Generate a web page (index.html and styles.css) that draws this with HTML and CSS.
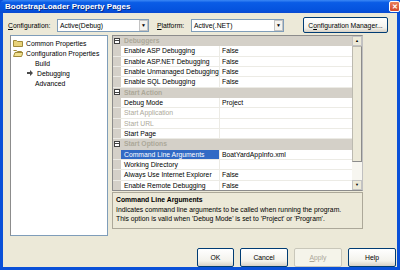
FILE: index.html
```html
<!DOCTYPE html>
<html lang="en">
<head>
    <meta charset="UTF-8">
    <title>BootstrapLoader Property Pages</title>
    <link rel="stylesheet" href="styles.css">
</head>
<body>
    <div class="window">
        <div class="titlebar">
            <span class="title">BootstrapLoader Property Pages</span>
            <span class="close">&#x2715;</span>
        </div>

        <div class="client">
            <div class="toprow">
                <span class="label"><u>C</u>onfiguration:</span>
                <div class="combo combo-config"><span>Active(Debug)</span><b class="drop">&#9660;</b></div>
                <span class="label label-platform"><u>P</u>latform:</span>
                <div class="combo combo-platform"><span>Active(.NET)</span><b class="drop">&#9660;</b></div>
                <button class="btn btn-manager">C<u>o</u>nfiguration Manager...</button>
            </div>

            <div class="middle">
                <div class="tree">
                    <div class="node"><svg class="folder" width="10" height="8" viewBox="0 0 10 8"><path d="M0.5 1.5h3l1 1h5v5h-9z" fill="#e8d27a" stroke="#a08a3a"/></svg>Common Properties</div>
                    <div class="node"><svg class="folder" width="10" height="8" viewBox="0 0 10 8"><path d="M0.5 1.5h3l1 1h4v1.5" fill="#e8d27a" stroke="#a08a3a"/><path d="M0.5 7.5l1.5-4h8l-1.5 4z" fill="#f2e190" stroke="#a08a3a"/></svg>Configuration Properties</div>
                    <div class="node child">Build</div>
                    <div class="node child"><svg class="pin" width="8" height="8" viewBox="0 0 8 8"><path d="M1 3h3V1l3 3-3 3V5H1z" fill="#4a4a4a"/></svg>Debugging</div>
                    <div class="node child">Advanced</div>
                </div>

                <div class="rightcol">
                    <div class="grid">
                        <div class="rows">
                            <div class="row cat"><span class="gutter"><i class="minus"></i></span><span class="catname">Debuggers</span></div>
                            <div class="row"><span class="gutter"></span><span class="name">Enable ASP Debugging</span><span class="value">False</span></div>
                            <div class="row"><span class="gutter"></span><span class="name">Enable ASP.NET Debugging</span><span class="value">False</span></div>
                            <div class="row"><span class="gutter"></span><span class="name">Enable Unmanaged Debugging</span><span class="value">False</span></div>
                            <div class="row"><span class="gutter"></span><span class="name">Enable SQL Debugging</span><span class="value">False</span></div>
                            <div class="row cat"><span class="gutter"><i class="minus"></i></span><span class="catname">Start Action</span></div>
                            <div class="row"><span class="gutter"></span><span class="name">Debug Mode</span><span class="value">Project</span></div>
                            <div class="row disabled"><span class="gutter"></span><span class="name">Start Application</span><span class="value"></span></div>
                            <div class="row disabled"><span class="gutter"></span><span class="name">Start URL</span><span class="value"></span></div>
                            <div class="row"><span class="gutter"></span><span class="name">Start Page</span><span class="value"></span></div>
                            <div class="row cat"><span class="gutter"><i class="minus"></i></span><span class="catname">Start Options</span></div>
                            <div class="row selected"><span class="gutter"></span><span class="name">Command Line Arguments</span><span class="value">BoatYardAppInfo.xml</span></div>
                            <div class="row"><span class="gutter"></span><span class="name">Working Directory</span><span class="value"></span></div>
                            <div class="row"><span class="gutter"></span><span class="name">Always Use Internet Explorer</span><span class="value">False</span></div>
                            <div class="row"><span class="gutter"></span><span class="name">Enable Remote Debugging</span><span class="value">False</span></div>
                        </div>
                        <div class="scrollbar">
                            <div class="arrow">&#9650;</div>
                            <div class="thumb"></div>
                            <div class="track"></div>
                            <div class="arrow">&#9660;</div>
                        </div>
                    </div>
                    <div class="desc">
                        <div class="desc-title">Command Line Arguments</div>
                        <div class="desc-text">Indicates command line arguments to be called when running the program.<br>This option is valid when 'Debug Mode' is set to 'Project' or 'Program'.</div>
                    </div>
                </div>
            </div>

            <div class="buttons">
                <button class="btn btn-ok">OK</button>
                <button class="btn">Cancel</button>
                <button class="btn" disabled><u>A</u>pply</button>
                <button class="btn">Help</button>
            </div>
        </div>
    </div>
</body>
</html>
```

FILE: styles.css
```css
body {
    margin: 0;
    padding: 0;
    font-family: "Liberation Sans", Arial, sans-serif;
    font-size: 6.8px;
    color: #000000;
    background-color: #ffffff;
}
.window {
    width: 400px;
    height: 270px;
    box-sizing: border-box;
    display: flex;
    flex-direction: column;
    background-color: #0a50d8;
    padding: 0 3px 3px 3px;
    overflow: hidden;
}
.titlebar {
    height: 18px;
    margin: 0 -3px;
    display: flex;
    align-items: center;
    justify-content: space-between;
    padding: 0 3px 0 5px;
    background: linear-gradient(#3b88f5, #0a5ce6 20%, #0553de 75%, #0a4ad0);
    border-radius: 5px 5px 0 0;
}
.titlebar .title {
    color: #ffffff;
    font-weight: bold;
    font-size: 8px;
    text-shadow: 1px 1px 0 #0a2a80;
}
.titlebar .close {
    width: 11px;
    height: 11px;
    box-sizing: border-box;
    margin-right: -3px;
    border: 1px solid #ffffff;
    border-radius: 2px;
    background: linear-gradient(#e8805e, #d4482a);
    color: #ffffff;
    font-size: 7px;
    font-weight: bold;
    line-height: 9px;
    text-align: center;
}
.client {
    flex: 1;
    display: flex;
    flex-direction: column;
    background-color: #ece9d8;
}
.toprow {
    display: flex;
    align-items: center;
    height: 16px;
    margin-top: 4px;
    padding-left: 5px;
}
.label {
    width: 49px;
}
.label-platform {
    width: 34px;
    margin-left: 8px;
}
.combo {
    height: 13px;
    box-sizing: border-box;
    border: 1px solid #7f9db9;
    background-color: #ffffff;
    display: flex;
    align-items: center;
    justify-content: space-between;
    padding-left: 2px;
}
.combo-config {
    width: 92px;
}
.combo-platform {
    width: 93px;
}
.combo .drop {
    width: 9px;
    height: 11px;
    box-sizing: border-box;
    border: 1px solid #c3c3c3;
    background-color: #f4f3ee;
    font-size: 5px;
    line-height: 9px;
    text-align: center;
    font-weight: normal;
}
.btn {
    height: 16px;
    box-sizing: border-box;
    border: 1px solid #003c74;
    border-radius: 2px;
    background: linear-gradient(#ffffff, #f3f2ec 70%, #d6d0c5);
    font-family: "Liberation Sans", Arial, sans-serif;
    font-size: 6.8px;
    color: #000000;
    padding: 0;
}
.btn:disabled {
    color: #aca899;
    border-color: #c9c7ba;
    background: #f5f4ea;
}
.btn-manager {
    width: 85px;
    margin-left: 19px;
}
.middle {
    display: flex;
    margin-top: 2px;
    padding-left: 7px;
}
.tree {
    width: 98px;
    height: 201px;
    box-sizing: border-box;
    border: 1px solid #7f9db9;
    border-left-color: #8c8c8c;
    background-color: #ffffff;
    padding-top: 2px;
}
.node {
    display: flex;
    align-items: center;
    height: 10px;
    padding-left: 2px;
}
.node.child {
    padding-left: 24px;
}
.folder {
    margin-right: 3px;
}
.pin {
    margin-left: -9px;
    margin-right: 3px;
}
.rightcol {
    margin-left: 4px;
    width: 251px;
}
.grid {
    height: 156px;
    box-sizing: border-box;
    border: 1px solid #8c8c8c;
    border-right-color: #c0c0c0;
    display: flex;
    background-color: #ffffff;
}
.rows {
    flex: 1;
    overflow: hidden;
}
.row {
    display: flex;
    height: 10.33px;
    box-sizing: border-box;
    border-bottom: 1px solid #ecebe5;
    align-items: center;
}
.gutter {
    width: 8px;
    align-self: stretch;
    background-color: #d4d0c8;
    display: flex;
    align-items: center;
    justify-content: center;
}
.minus {
    width: 6px;
    height: 6px;
    box-sizing: border-box;
    border: 1px solid #404040;
    background: linear-gradient(#404040, #404040) center / 4px 1px no-repeat, #ffffff;
}
.name {
    width: 99px;
    padding-left: 3px;
    box-sizing: border-box;
    align-self: stretch;
    display: flex;
    align-items: center;
    border-right: 1px solid #ecebe5;
    white-space: nowrap;
    overflow: hidden;
}
.value {
    flex: 1;
    padding-left: 2px;
    white-space: nowrap;
}
.row.cat {
    background-color: #d4d0c8;
    border-bottom-color: #d4d0c8;
}
.catname {
    padding-left: 3px;
    color: #aca899;
    font-weight: bold;
}
.row.disabled .name {
    color: #aca899;
}
.row.selected .name {
    background-color: #316ac5;
    color: #ffffff;
}
.scrollbar {
    width: 10px;
    display: flex;
    flex-direction: column;
    background-color: #f4f3ee;
}
.scrollbar .arrow {
    height: 10px;
    box-sizing: border-box;
    border: 1px solid #c3c3c3;
    background-color: #ece9d8;
    font-size: 4px;
    line-height: 8px;
    text-align: center;
}
.scrollbar .thumb {
    height: 116px;
    box-sizing: border-box;
    border: 1px solid #bcbab0;
    border-right-color: #8c8c8c;
    border-bottom-color: #8c8c8c;
    background-color: #ece9d8;
}
.scrollbar .track {
    flex: 1;
    background-color: #f7f6f0;
}
.desc {
    margin-top: 1px;
    height: 37px;
    box-sizing: border-box;
    border: 1px solid #aca899;
    padding: 2px 3px;
    line-height: 9.5px;
}
.desc-title {
    font-weight: bold;
}
.buttons {
    display: flex;
    justify-content: flex-end;
    gap: 6px;
    margin-top: 12px;
    padding-right: 1px;
}
.buttons .btn {
    width: 48px;
    height: 19px;
}
.buttons .btn-ok {
    width: 37px;
}
```
